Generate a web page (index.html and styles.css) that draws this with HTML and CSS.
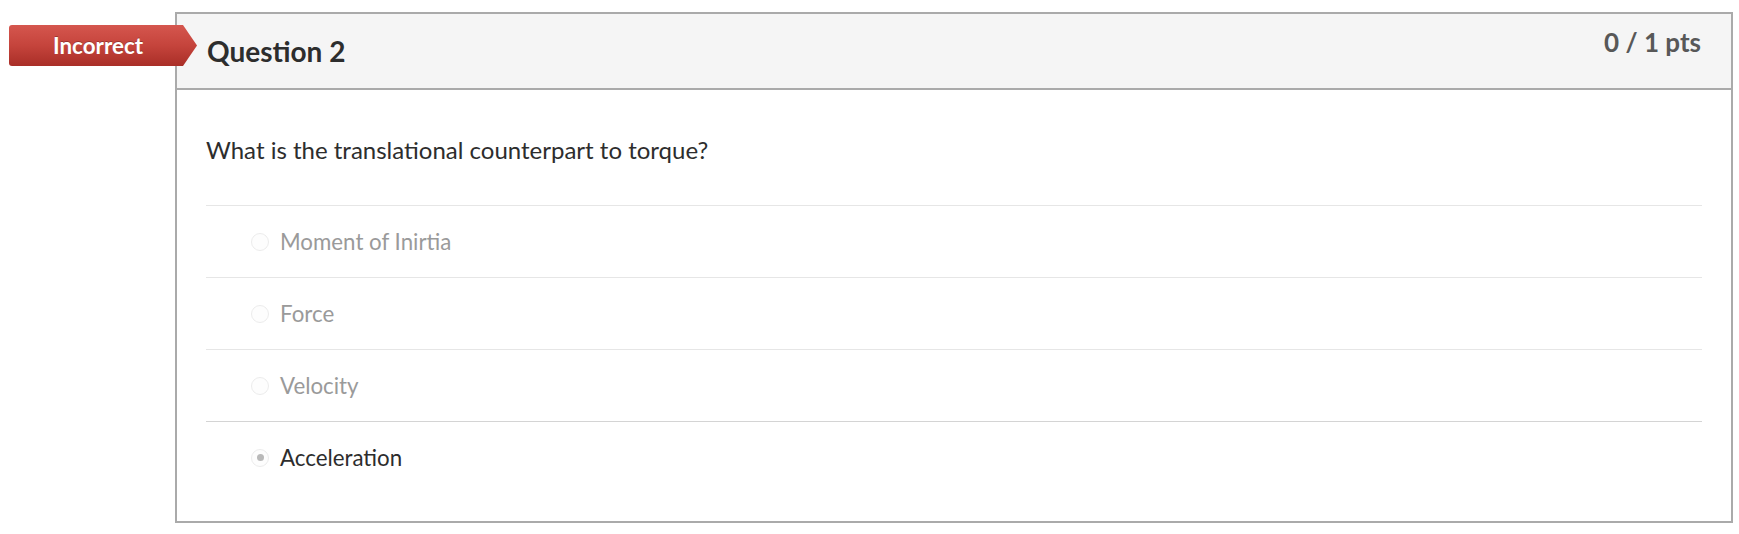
FILE: index.html
```html
<!DOCTYPE html>
<html lang="en">
<head>
<meta charset="utf-8">
<title>Question 2</title>
<link rel="stylesheet" href="styles.css">
</head>
<body>
<div class="page">
  <div class="badge"><span class="badge-text">Incorrect</span></div>
  <div class="question">
    <div class="q-header">
      <h3 class="q-title">Question 2</h3>
      <div class="q-points">0 / 1 pts</div>
    </div>
    <div class="q-body">
      <div class="q-text">What is the translational counterpart to torque?</div>
      <div class="answers">
        <div class="answer">
          <span class="radio"></span><span class="label">Moment of Inirtia</span>
        </div>
        <div class="answer">
          <span class="radio"></span><span class="label">Force</span>
        </div>
        <div class="answer">
          <span class="radio"></span><span class="label">Velocity</span>
        </div>
        <div class="answer selected">
          <span class="radio"><span class="dot"></span></span><span class="label">Acceleration</span>
        </div>
      </div>
    </div>
  </div>
</div>
</body>
</html>
```
FILE: styles.css
```css
html, body {
  margin: 0;
  padding: 0;
  background: #ffffff;
}
body {
  font-family: Lato, "Open Sans", "Liberation Sans", sans-serif;
  color: #2d2d2d;
}
.page {
  position: relative;
  padding: 12px 6px 11px 175px;
}
.badge {
  position: absolute;
  left: 9px;
  top: 25px;
  width: 188px;
  height: 41px;
  background: linear-gradient(to bottom, #d5564e 0%, #c5443c 50%, #a92e27 100%);
  clip-path: polygon(0 0, 174px 0, 188px 50%, 174px 100%, 0 100%);
  border-radius: 3px 0 0 3px;
  box-sizing: border-box;
  padding-left: 44px;
}
.badge-text {
  display: block;
  color: #ffffff;
  font-size: 22.4px;
  font-weight: 700;
  line-height: 41px;
  text-shadow: 0 -1px 0 rgba(0,0,0,0.25);
  white-space: nowrap;
}
.question {
  border: 2px solid #aaaaaa;
  background: #ffffff;
}
.q-header {
  display: flex;
  justify-content: space-between;
  align-items: flex-start;
  height: 74px;
  background: #f5f5f5;
  border-bottom: 2px solid #aaaaaa;
  padding: 0 30px 0 30px;
}
.q-title {
  margin: 21px 0 0 0;
  font-size: 28px;
  font-weight: 700;
  line-height: 1.2;
  color: #2d2d2d;
}
.q-points {
  margin-top: 13px;
  font-size: 26px;
  font-weight: 700;
  line-height: 1.2;
  color: #585858;
}
.q-body {
  padding: 46px 29px 28px 29px;
}
.q-text {
  font-size: 24px;
  line-height: 28px;
  color: #2d2d2d;
  margin-bottom: 41px;
}
.answers {
  display: flex;
  flex-direction: column;
}
.answer {
  display: flex;
  align-items: center;
  height: 71px;
  border-top: 1px solid #e6e6e6;
  padding-left: 45px;
}
.answer.selected {
  border-top-color: #d4d4d4;
}
.radio {
  display: flex;
  align-items: center;
  justify-content: center;
  width: 18px;
  height: 18px;
  box-sizing: border-box;
  border-radius: 50%;
  border: 1px solid #ececec;
  background: #fdfdfd;
  margin-right: 11px;
  flex: none;
}
.dot {
  width: 7px;
  height: 7px;
  border-radius: 50%;
  background: #b9b9b9;
}
.label {
  font-size: 22.3px;
  color: #9a9a9a;
}
.answer.selected .label {
  color: #2d2d2d;
}
```
